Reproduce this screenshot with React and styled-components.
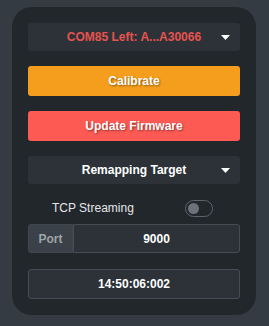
import React, { useState } from "react";
import styled, { createGlobalStyle } from "styled-components";

const GlobalStyle = createGlobalStyle`
	html, body {
		margin: 0;
		padding: 0;
		background: #343b43;
		font-family: "Liberation Sans", Arial, sans-serif;
	}
`;

function Caret() {
	return (
		<svg width="9" height="5" viewBox="0 0 9 5">
			<polygon points="0,0 9,0 4.5,5" fill="#ffffff" />
		</svg>
	);
}

function App() {
	const [streaming, setStreaming] = useState(false);

	return (
		<Page>
			<GlobalStyle />
			<Card>
				<Select color="#e8524f">
					<span>COM85 Left: A...A30066</span>
					<Caret />
				</Select>

				<ActionButton bg="#f59e1d">Calibrate</ActionButton>
				<ActionButton bg="#fd5a54">Update Firmware</ActionButton>

				<Select color="#ffffff">
					<span>Remapping Target</span>
					<Caret />
				</Select>

				<ToggleRow>
					<ToggleLabel>TCP Streaming</ToggleLabel>
					<Toggle $on={streaming} onClick={() => setStreaming(!streaming)} />
				</ToggleRow>

				<InputGroup>
					<GroupLabel>Port</GroupLabel>
					<GroupValue>9000</GroupValue>
				</InputGroup>

				<TimeBox>14:50:06:002</TimeBox>
			</Card>
		</Page>
	);
}

export default App;

const Page = styled.div`
	width: 269px;
	height: 326px;
	padding: 7px 13px 11px 12px;
	box-sizing: border-box;
`;

const Card = styled.div`
	background: #22272c;
	border-radius: 20px;
	padding: 16px;
	height: 308px;
	box-sizing: border-box;
	display: flex;
	flex-direction: column;
`;

const Select = styled.div`
	height: 28px;
	flex-shrink: 0;
	background: #2c3238;
	border-radius: 3px;
	display: flex;
	align-items: center;
	padding: 0 10px 0 19px;
	margin-bottom: 15px;
	font-size: 12px;
	font-weight: bold;
	color: ${(p) => p.color};

	span {
		flex: 1;
		text-align: center;
	}
`;

const ActionButton = styled.div`
	height: 30px;
	flex-shrink: 0;
	background: ${(p) => p.bg};
	border-radius: 3px;
	display: flex;
	align-items: center;
	justify-content: center;
	margin-bottom: 15px;
	font-size: 12px;
	font-weight: bold;
	color: #ffffff;
	text-shadow: 1px 1px 2px rgba(0, 0, 0, 0.45);
`;

const ToggleRow = styled.div`
	display: flex;
	align-items: center;
	height: 18px;
	flex-shrink: 0;
	margin: 0 0 7px 24px;
`;

const ToggleLabel = styled.span`
	font-size: 12px;
	color: #e4e6e8;
	width: 133px;
`;

const Toggle = styled.div`
	width: 26px;
	height: 15px;
	border: 1px solid #5c636a;
	border-radius: 9px;
	position: relative;
	cursor: pointer;

	&::after {
		content: "";
		position: absolute;
		top: 2px;
		left: ${(p) => (p.$on ? "13px" : "2px")};
		width: 11px;
		height: 11px;
		border-radius: 50%;
		background: #6c717a;
	}
`;

const InputGroup = styled.div`
	display: flex;
	height: 29px;
	flex-shrink: 0;
	margin-bottom: 16px;
`;

const GroupLabel = styled.div`
	width: 45px;
	background: #3a4148;
	border: 1px solid #3f464d;
	border-radius: 3px 0 0 3px;
	box-sizing: border-box;
	display: flex;
	align-items: center;
	justify-content: center;
	font-size: 12px;
	font-weight: bold;
	color: #9fa4a9;
`;

const GroupValue = styled.div`
	flex: 1;
	background: #2c3238;
	border: 1px solid #454c53;
	border-radius: 0 3px 3px 0;
	box-sizing: border-box;
	display: flex;
	align-items: center;
	justify-content: center;
	font-size: 12px;
	font-weight: bold;
	color: #ffffff;
`;

const TimeBox = styled.div`
	height: 30px;
	flex-shrink: 0;
	background: #2c3238;
	border: 1px solid #454c53;
	border-radius: 3px;
	box-sizing: border-box;
	display: flex;
	align-items: center;
	justify-content: center;
	font-size: 12px;
	font-weight: bold;
	color: #ffffff;
`;
